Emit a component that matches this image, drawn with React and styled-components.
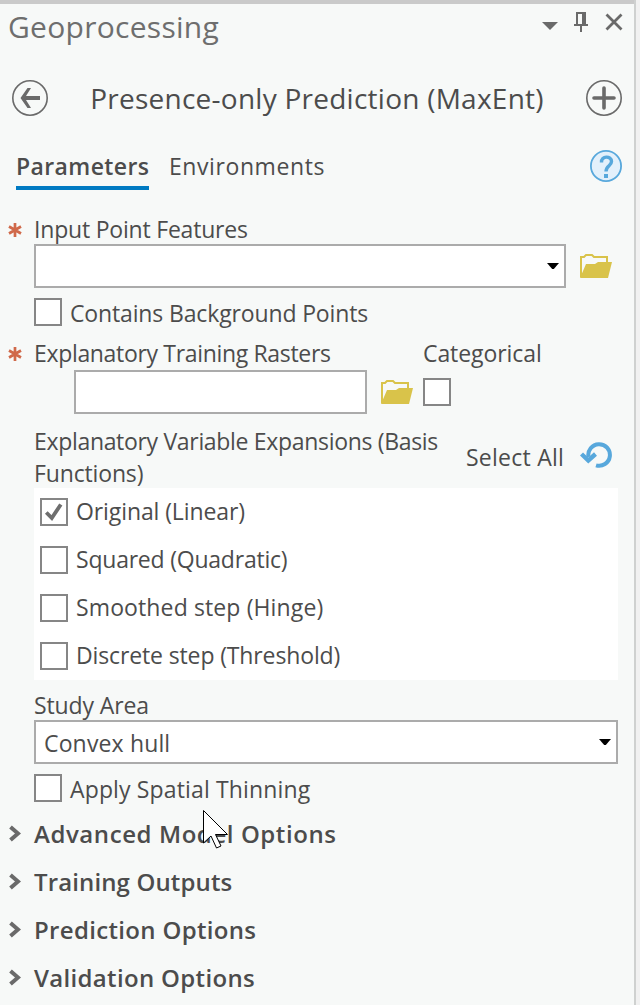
import React, { useState } from "react";
import styled, { createGlobalStyle } from "styled-components";

const GlobalStyle = createGlobalStyle`
  * {
    box-sizing: border-box;
  }
  body {
    margin: 0;
    background: #f1f1f1;
    font-family: "Open Sans", "Noto Sans", sans-serif;
    font-size: 23px;
    color: #4c4c4c;
  }
`;

const Panel = styled.div`
  width: 636px;
  height: 1005px;
  background: #f7f9f8;
  border-right: 2px solid #cfd1d0;
  overflow: hidden;
`;

const TopEdge = styled.div`
  height: 4px;
  background: #cacaca;
`;

const TitleBar = styled.div`
  display: flex;
  justify-content: space-between;
  height: 46px;
  padding: 0 10px 0 8px;
`;

const PanelTitle = styled.div`
  font-size: 30px;
  line-height: 46px;
  color: #6e6e6e;
  white-space: nowrap;
  letter-spacing: 0.28px;
`;

const WindowButtons = styled.div`
  display: flex;
  padding-top: 6px;
  height: 32px;
`;

const ToolHeader = styled.div`
  display: flex;
  align-items: center;
  justify-content: space-between;
  height: 96px;
  padding: 0 12px;
`;

const ToolName = styled.h1`
  margin: 0;
  font-size: 28px;
  font-weight: 400;
  line-height: 40px;
  white-space: nowrap;
  letter-spacing: 0.25px;
`;

const TabBar = styled.div`
  display: flex;
  align-items: flex-start;
  height: 68px;
  padding: 4px 12px 0 16px;
`;

const Tab = styled.div`
  height: 40px;
  width: ${(p) => p.$width}px;
  margin-right: 20px;
  line-height: 32px;
  white-space: nowrap;
  cursor: pointer;
  font-weight: ${(p) => (p.$active ? 600 : 400)};
  border-bottom: 4px solid ${(p) => (p.$active ? "#007ac2" : "transparent")};
  letter-spacing: ${(p) => p.$spacing || 0}px;
`;

const HelpButton = styled.div`
  height: 32px;
  margin-left: auto;
`;

const Label = styled.div`
  width: ${(p) => (p.$width ? `${p.$width}px` : "auto")};
  height: 30px;
  line-height: 30px;
  white-space: nowrap;
  letter-spacing: ${(p) => p.$spacing || 0}px;
`;

const FieldLabel = styled.div`
  display: flex;
  align-items: center;
  height: ${(p) => p.$height || 30}px;
  padding-left: 8px;

  svg {
    margin: 2px 12px 0 0;
  }
`;

const FieldRow = styled.div`
  display: flex;
  align-items: center;
  padding-left: ${(p) => p.$indent || 34}px;
`;

const Box = styled.div`
  display: flex;
  align-items: center;
  justify-content: space-between;
  width: ${(p) => p.$width}px;
  height: 44px;
  padding: 0 5px 0 8px;
  background: #fff;
  border: 2px solid #ababab;
`;

const BoxText = styled.span`
  padding-top: 2px;
  letter-spacing: 0.15px;
`;

const BrowseButton = styled.div`
  height: 24px;
  width: 32px;
  margin: 0 10px 0 14px;
`;

const CheckRow = styled.div`
  display: flex;
  align-items: center;
  height: ${(p) => p.$height || 48}px;
  margin-top: ${(p) => p.$gap || 0}px;
  padding-left: ${(p) => p.$indent || 6}px;
`;

const CheckBox = styled.div`
  display: flex;
  align-items: center;
  justify-content: center;
  width: 28px;
  height: 28px;
  flex: none;
  background: #fff;
  border: 2px solid #868686;
  cursor: pointer;
`;

const CheckText = styled.span`
  padding: ${(p) => (p.$inList ? "0 0 2px 8px" : "2px 0 0 8px")};
  white-space: nowrap;
  letter-spacing: ${(p) => p.$spacing || 0}px;
`;

const Expansions = styled.div`
  display: flex;
  height: 64px;
  margin-top: 10px;
  padding-left: 34px;
`;

const ExpansionsLabel = styled.div`
  width: 432px;
  padding-top: 1px;
`;

const ExpansionsLine = styled.div`
  height: 32px;
  line-height: 32px;
  white-space: nowrap;
  letter-spacing: ${(p) => p.$spacing || 0}px;
`;

const SelectAll = styled.div`
  width: 114px;
  padding-top: 17px;
  line-height: 32px;
  letter-spacing: 0.25px;
`;

const ResetButton = styled.div`
  padding-top: 17px;
`;

const CheckList = styled.div`
  width: 584px;
  margin: 0 0 10px 34px;
  background: #fff;
`;

const Section = styled.div`
  display: flex;
  align-items: center;
  height: 48px;
  padding-left: 9px;
  font-size: 24px;
  font-weight: 600;
  cursor: pointer;
  white-space: nowrap;
`;

const SectionTitle = styled.span`
  padding: 0 0 1px 13px;
  letter-spacing: ${(p) => p.$spacing || 0}px;
`;

const Pointer = styled.svg`
  position: absolute;
  left: 203px;
  top: 810px;
`;

const FolderSvg = styled.svg`
  display: block;
`;

const Required = () => (
  <svg width="14" height="16" viewBox="0 0 14 16">
    <path d="M7 1V15M1 4.5L13 11.5M13 4.5L1 11.5" stroke="#d0694a" strokeWidth="2.7" />
  </svg>
);

const FolderIcon = () => (
  <FolderSvg width="32" height="24" viewBox="0 0 32 24">
    <path d="M1 23V3H4L6 1H12L14 3H27V9" fill="#f7f9f8" stroke="#d9c34a" strokeWidth="2" />
    <path d="M0 24L6 10H15L18 8H32L28 24Z" fill="#d9c34a" />
  </FolderSvg>
);

const DropArrow = () => (
  <svg width="12" height="6" viewBox="0 0 12 6">
    <path d="M0 0H12L6.8 6H5.2Z" fill="#000" />
  </svg>
);

const expansionOptions = [
  { name: "Original (Linear)", spacing: -0.1 },
  { name: "Squared (Quadratic)", spacing: -0.22 },
  { name: "Smoothed step (Hinge)", spacing: 0.12 },
  { name: "Discrete step (Threshold)", spacing: -0.13 },
];

const sections = [
  { name: "Advanced Model Options", spacing: 0.58 },
  { name: "Training Outputs", spacing: 0.13 },
  { name: "Prediction Options", spacing: 0.33 },
  { name: "Validation Options", spacing: 0.33 },
];

const Check = ({ checked, onClick }) => (
  <CheckBox onClick={onClick}>
    {checked && (
      <svg width="20" height="20" viewBox="0 0 20 20">
        <path d="M2.3 10.5L7.8 16L16.8 2.5" fill="none" stroke="#6e6e6e" strokeWidth="3.8" />
      </svg>
    )}
  </CheckBox>
);

const App = () => {
  const [checked, setChecked] = useState({ "Original (Linear)": true });

  const toggle = (name) => {
    setChecked((prev) => ({ ...prev, [name]: !prev[name] }));
  };

  return (
    <>
      <GlobalStyle />
      <Panel>
        <TopEdge />
        <TitleBar>
          <PanelTitle>Geoprocessing</PanelTitle>
          <WindowButtons>
            <svg width="84" height="26" viewBox="0 0 84 26">
              <path d="M2 12H18L10 20Z" fill="#6a6a6a" />
              <path d="M37 15V3H44V15M34 15H48M41 15V22" fill="none" stroke="#6a6a6a" strokeWidth="2" />
              <path d="M42 2H46V15H42Z" fill="#6a6a6a" />
              <path d="M66.5 4.5L81.5 19.5M81.5 4.5L66.5 19.5" stroke="#6a6a6a" strokeWidth="2.8" />
            </svg>
          </WindowButtons>
        </TitleBar>

        <ToolHeader>
          <svg width="36" height="36" viewBox="0 0 36 36">
            <circle cx="18" cy="18" r="17.2" fill="none" stroke="#6a6a6a" strokeWidth="1.6" />
            <path d="M28 16V20H14L19 28H15.5L8.5 18L15.5 8H19L14 16Z" fill="#6a6a6a" />
          </svg>
          <ToolName>Presence-only Prediction (MaxEnt)</ToolName>
          <svg width="36" height="36" viewBox="0 0 36 36">
            <circle cx="18" cy="18" r="17.2" fill="none" stroke="#6a6a6a" strokeWidth="1.6" />
            <path d="M18 8V28M8 18H28" stroke="#6a6a6a" strokeWidth="3.6" strokeLinecap="round" />
          </svg>
        </ToolHeader>

        <TabBar>
          <Tab $active $width={133} $spacing={0.4}>Parameters</Tab>
          <Tab $width={160} $spacing={0.58}>Environments</Tab>
          <HelpButton>
            <svg width="32" height="32" viewBox="0 0 32 32">
              <circle cx="16" cy="16" r="15.1" fill="#e3f0fb" stroke="#58a8dc" strokeWidth="1.8" />
              <path d="M11.5 12.5C11 5.5 21.5 5.5 21.5 11.5C21.5 16 16 15.5 16 21.5" fill="none" stroke="#58a8dc" strokeWidth="3.4" />
              <rect x="14" y="24" width="4" height="4" fill="#58a8dc" />
            </svg>
          </HelpButton>
        </TabBar>

        <FieldLabel>
          <Required />
          <Label $spacing={-0.2}>Input Point Features</Label>
        </FieldLabel>
        <FieldRow>
          <Box $width={532}>
            <span />
            <DropArrow />
          </Box>
          <BrowseButton>
            <FolderIcon />
          </BrowseButton>
        </FieldRow>
        <CheckRow $indent={34}>
          <Check checked={checked.background} onClick={() => toggle("background")} />
          <CheckText $spacing={-0.14}>Contains Background Points</CheckText>
        </CheckRow>

        <FieldLabel $height={34}>
          <Required />
          <Label $width={389} $spacing={-0.33}>Explanatory Training Rasters</Label>
          <Label $spacing={-0.08}>Categorical</Label>
        </FieldLabel>
        <FieldRow $indent={74}>
          <Box $width={293} />
          <BrowseButton>
            <FolderIcon />
          </BrowseButton>
          <Check checked={checked.categorical} onClick={() => toggle("categorical")} />
        </FieldRow>

        <Expansions>
          <ExpansionsLabel>
            <ExpansionsLine $spacing={-0.32}>Explanatory Variable Expansions (Basis</ExpansionsLine>
            <ExpansionsLine $spacing={-0.15}>Functions)</ExpansionsLine>
          </ExpansionsLabel>
          <SelectAll>Select All</SelectAll>
          <ResetButton>
            <svg width="32" height="28" viewBox="0 0 32 28">
              <path d="M8.5 16A10.8 10.8 0 1 1 16 24.3" fill="none" stroke="#58a8dc" strokeWidth="4" />
              <path d="M1.5 13L8.3 19.5L15.5 13" fill="none" stroke="#58a8dc" strokeWidth="4.4" />
            </svg>
          </ResetButton>
        </Expansions>
        <CheckList>
          {expansionOptions.map((option) => (
            <CheckRow key={option.name}>
              <Check checked={checked[option.name]} onClick={() => toggle(option.name)} />
              <CheckText $inList $spacing={option.spacing}>{option.name}</CheckText>
            </CheckRow>
          ))}
        </CheckList>

        <FieldRow>
          <Label $spacing={-0.12}>Study Area</Label>
        </FieldRow>
        <FieldRow>
          <Box $width={584}>
            <BoxText>Convex hull</BoxText>
            <DropArrow />
          </Box>
        </FieldRow>
        <CheckRow $height={44} $gap={2} $indent={34}>
          <Check checked={checked.thinning} onClick={() => toggle("thinning")} />
          <CheckText $spacing={0.14}>Apply Spatial Thinning</CheckText>
        </CheckRow>

        {sections.map((section) => (
          <Section key={section.name}>
            <svg width="12" height="18" viewBox="0 0 12 18">
              <path d="M1.5 2L9 8.5L1.5 15" fill="none" stroke="#6a6a6a" strokeWidth="4" />
            </svg>
            <SectionTitle $spacing={section.spacing}>{section.name}</SectionTitle>
          </Section>
        ))}
      </Panel>
      <Pointer width="26" height="40" viewBox="0 0 26 40">
        <path d="M0.5 0.5V33L8 26L13.5 38L18 36L12.5 24.5H24.5Z" fill="#fff" stroke="#000" />
      </Pointer>
    </>
  );
};

export default App;
